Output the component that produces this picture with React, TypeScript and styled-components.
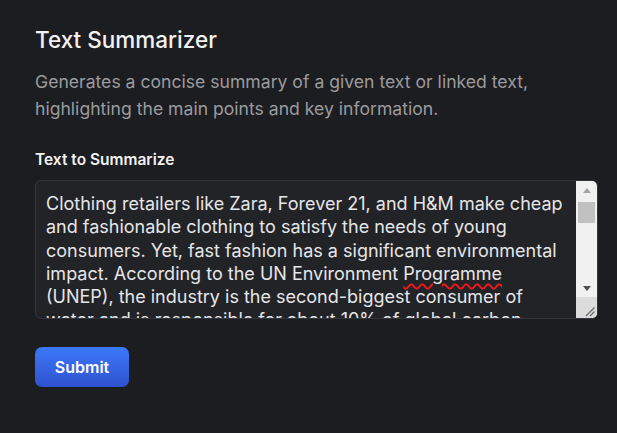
import React from 'react';
import styled, { createGlobalStyle } from 'styled-components';

const GlobalStyle = createGlobalStyle`
    html, body {
        margin: 0;
        padding: 0;
        background: #1c1d21;
        font-family: Inter, "Noto Sans", sans-serif;
    }
`

const Page = styled.div`
    padding: 25px 19px 0 35px;
    min-height: 433px;
    box-sizing: border-box;
`

const Title = styled.h1`
    margin: 0;
    font-size: 22.5px;
    font-weight: 500;
    color: #f2f2f2;
    line-height: 30px;
`

const Description = styled.p`
    margin: 13px 0 0;
    font-size: 17.6px;
    line-height: 27px;
    color: #9b9b9e;
    max-width: 545px;
`

const Label = styled.label`
    display: block;
    margin-top: 28px;
    font-size: 15.5px;
    font-weight: 600;
    color: #f2f2f2;
    line-height: 20px;
`

const Field = styled.div`
    display: flex;
    box-sizing: border-box;
    margin-top: 10px;
    width: 563px;
    height: 139px;
    background: #222327;
    border: 1px solid #34353a;
    border-radius: 6px;
    overflow: hidden;
`

const Editor = styled.div`
    flex: 1;
    min-width: 0;
    box-sizing: border-box;
    padding: 11px 10px 8px;
    color: #e6e6e8;
    font-size: 18px;
    line-height: 23.3px;
    white-space: pre-wrap;
    overflow-wrap: break-word;
    outline: none;
    overflow: hidden;
`

const Misspelled = styled.span`
    text-decoration: underline wavy #f01818;
    text-decoration-thickness: 1.5px;
    text-underline-offset: 3px;
`

const ScrollBar = styled.div`
    display: flex;
    flex-direction: column;
    width: 21px;
    flex-shrink: 0;
    background: #f1f1f1;
`

const ArrowButton = styled.div<{ $dir: 'up' | 'down'; $color: string }>`
    height: 18px;
    display: flex;
    align-items: center;
    justify-content: center;

    &::after {
        content: '';
        width: 0;
        height: 0;
        border-left: 4.5px solid transparent;
        border-right: 4.5px solid transparent;
        ${({ $dir, $color }) =>
            $dir === 'up'
                ? `border-bottom: 5px solid ${$color};`
                : `border-top: 5px solid ${$color};`}
    }
`

const Track = styled.div`
    flex: 1;
    padding: 3px 2px 0;
`

const Thumb = styled.div`
    height: 21px;
    background: #c1c1c1;
`

const Corner = styled.div`
    height: 21px;
    background: #dcdcdc;
    display: flex;
`

const SubmitButton = styled.button`
    margin-top: 28px;
    width: 94px;
    height: 40px;
    border: none;
    border-radius: 7px;
    background: linear-gradient(180deg, #3b78f7 0%, #2f52cf 100%);
    color: #ffffff;
    font-family: Inter, "Noto Sans", sans-serif;
    font-size: 16px;
    font-weight: 600;
    cursor: pointer;
`

const before =
    'Clothing retailers like Zara, Forever 21, and H&M make cheap and fashionable clothing to satisfy the needs of young consumers. Yet, fast fashion has a significant environmental impact. According to the UN Environment '
const after =
    ' (UNEP), the industry is the second-biggest consumer of water and is responsible for about 10% of global carbon emissions — more than all international flights and maritime shipping combined.'

const ResizeGrip: React.FC = () => (
    <svg width="21" height="21" viewBox="0 0 21 21">
        <path d="M10 19 L18.5 10.5 M14 19 L18.5 14.5" stroke="#6b6b6b" strokeWidth="1.3" />
    </svg>
)

const App: React.FC = () => (
    <>
        <GlobalStyle />
        <Page>
            <Title>Text Summarizer</Title>
            <Description>
                Generates a concise summary of a given text or linked text, highlighting the main points and key information.
            </Description>
            <Label id="summary-label">Text to Summarize</Label>
            <Field>
                <Editor
                    role="textbox"
                    aria-multiline="true"
                    aria-labelledby="summary-label"
                    contentEditable
                    suppressContentEditableWarning
                    spellCheck={false}
                >
                    {before}
                    <Misspelled>Programme</Misspelled>
                    {after}
                </Editor>
                <ScrollBar>
                    <ArrowButton $dir="up" $color="#a3a3a3" />
                    <Track>
                        <Thumb />
                    </Track>
                    <ArrowButton $dir="down" $color="#505050" />
                    <Corner>
                        <ResizeGrip />
                    </Corner>
                </ScrollBar>
            </Field>
            <SubmitButton type="button">Submit</SubmitButton>
        </Page>
    </>
);

export default App;
